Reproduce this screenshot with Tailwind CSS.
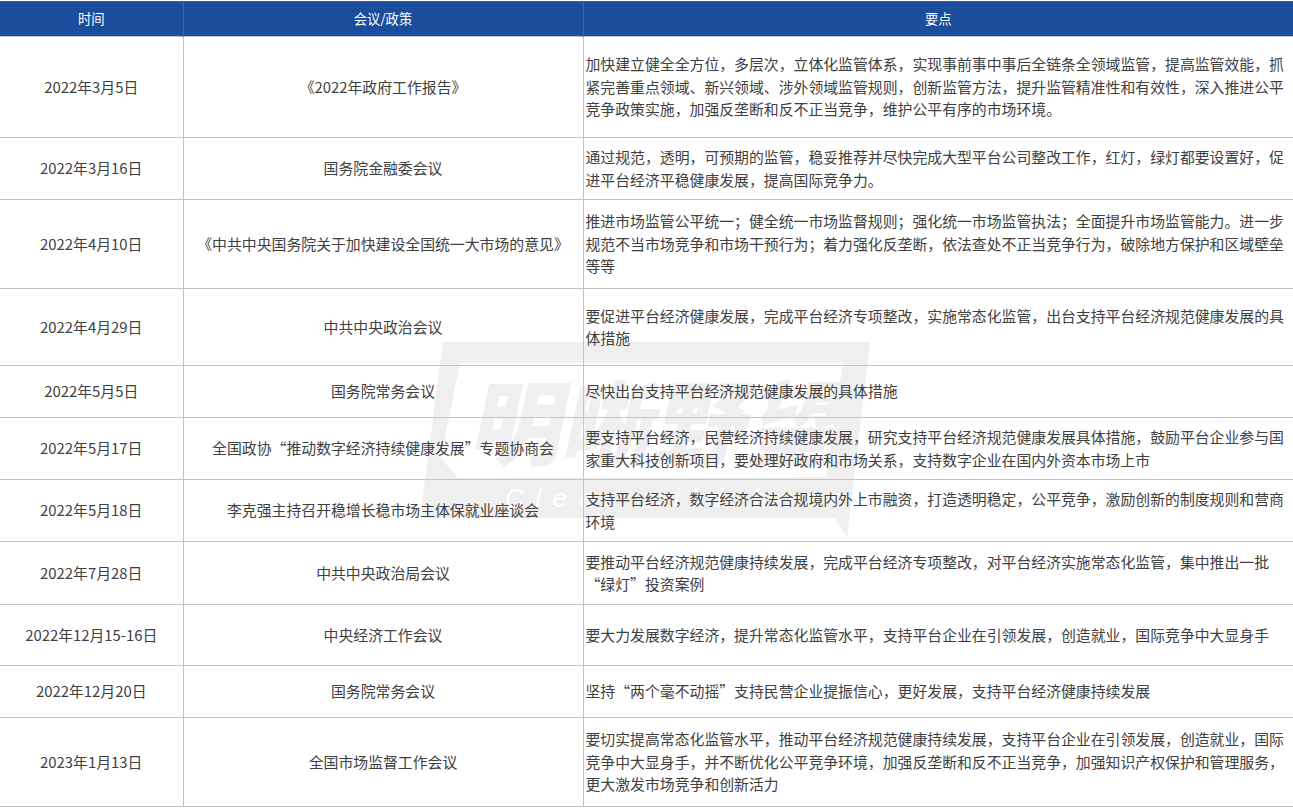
<!DOCTYPE html>
<html lang="zh">
<head>
  <meta charset="UTF-8" />
  <title>政策时间表</title>
  <script src="https://cdn.jsdelivr.net/npm/@tailwindcss/browser@4"></script>
</head>
<body class="bg-white overflow-hidden font-['Noto_Sans_CJK_SC','Noto_Sans',sans-serif] text-[#404040]">
  <div class="relative w-[1293px] h-[808px] pt-px">
    <!-- watermark behind the table -->
    <svg class="absolute left-0 top-0" width="1293" height="808" viewBox="0 0 1293 808">
      <path fill="#efefef" fill-rule="evenodd" d="M443 342H870L847 537L835 518H420ZM460 363L441 458L458 478L826 477L843 363Z" />
      <text transform="translate(468 458) skewX(-12)" font-family="'Noto Sans CJK SC',sans-serif" font-weight="900" font-size="92" fill="#efefef">明晰野望</text>
      <text x="505" y="507" font-family="'Liberation Sans',sans-serif" font-style="italic" font-size="26" letter-spacing="11.5" fill="#ffffff">Clear wild hope</text>
    </svg>
    <table class="relative w-[1293px] table-fixed border-collapse text-[14.87px] leading-[22.5px]">
      <colgroup>
        <col class="w-[183px]" />
        <col class="w-[400px]" />
        <col class="w-[710px]" />
      </colgroup>
      <thead>
        <tr class="h-[35px] bg-[#1a4e9c] text-white text-[13.3px] [&_th]:border-t [&_th]:border-t-[#3f5c8e]">
          <th class="font-normal">时间</th>
          <th class="font-normal border-l border-l-[#3d6aae]">会议/政策</th>
          <th class="font-normal border-l border-l-[#3d6aae]">要点</th>
        </tr>
      </thead>
      <tbody class="[&_td]:border [&_td]:border-[#c4c4c4] [&_td:first-child]:border-l-0 [&_td:first-child]:text-center [&_td:nth-child(2)]:text-center [&_td:last-child]:border-r-0 [&_td:last-child]:pl-[2px] [&_td:last-child]:pr-[6px]">
        <tr class="h-[101px]"><td>2022年3月5日</td><td>《2022年政府工作报告》</td><td>加快建立健全全方位，多层次，立体化监管体系，实现事前事中事后全链条全领域监管，提高监管效能，抓紧完善重点领域、新兴领域、涉外领域监管规则，创新监管方法，提升监管精准性和有效性，深入推进公平竞争政策实施，加强反垄断和反不正当竞争，维护公平有序的市场环境。</td></tr>
        <tr class="h-[62px]"><td>2022年3月16日</td><td>国务院金融委会议</td><td>通过规范，透明，可预期的监管，稳妥推荐并尽快完成大型平台公司整改工作，红灯，绿灯都要设置好，促进平台经济平稳健康发展，提高国际竞争力。</td></tr>
        <tr class="h-[89px]"><td>2022年4月10日</td><td>《中共中央国务院关于加快建设全国统一大市场的意见》</td><td>推进市场监管公平统一；健全统一市场监督规则；强化统一市场监管执法；全面提升市场监管能力。进一步规范不当市场竞争和市场干预行为；着力强化反垄断，依法查处不正当竞争行为，破除地方保护和区域壁垒等等</td></tr>
        <tr class="h-[77px]"><td>2022年4月29日</td><td>中共中央政治会议</td><td>要促进平台经济健康发展，完成平台经济专项整改，实施常态化监管，出台支持平台经济规范健康发展的具体措施</td></tr>
        <tr class="h-[52px]"><td>2022年5月5日</td><td>国务院常务会议</td><td>尽快出台支持平台经济规范健康发展的具体措施</td></tr>
        <tr class="h-[62px]"><td>2022年5月17日</td><td>全国政协“推动数字经济持续健康发展”专题协商会</td><td>要支持平台经济，民营经济持续健康发展，研究支持平台经济规范健康发展具体措施，鼓励平台企业参与国家重大科技创新项目，要处理好政府和市场关系，支持数字企业在国内外资本市场上市</td></tr>
        <tr class="h-[62px]"><td>2022年5月18日</td><td>李克强主持召开稳增长稳市场主体保就业座谈会</td><td>支持平台经济，数字经济合法合规境内外上市融资，打造透明稳定，公平竞争，激励创新的制度规则和营商环境</td></tr>
        <tr class="h-[63px]"><td>2022年7月28日</td><td>中共中央政治局会议</td><td>要推动平台经济规范健康持续发展，完成平台经济专项整改，对平台经济实施常态化监管，集中推出一批“绿灯”投资案例</td></tr>
        <tr class="h-[61px]"><td>2022年12月15-16日</td><td>中央经济工作会议</td><td>要大力发展数字经济，提升常态化监管水平，支持平台企业在引领发展，创造就业，国际竞争中大显身手</td></tr>
        <tr class="h-[52px]"><td>2022年12月20日</td><td>国务院常务会议</td><td>坚持“两个毫不动摇”支持民营企业提振信心，更好发展，支持平台经济健康持续发展</td></tr>
        <tr class="h-[89px]"><td>2023年1月13日</td><td>全国市场监督工作会议</td><td>要切实提高常态化监管水平，推动平台经济规范健康持续发展，支持平台企业在引领发展，创造就业，国际竞争中大显身手，并不断优化公平竞争环境，加强反垄断和反不正当竞争，加强知识产权保护和管理服务，更大激发市场竞争和创新活力</td></tr>
      </tbody>
    </table>
  </div>
</body>
</html>
